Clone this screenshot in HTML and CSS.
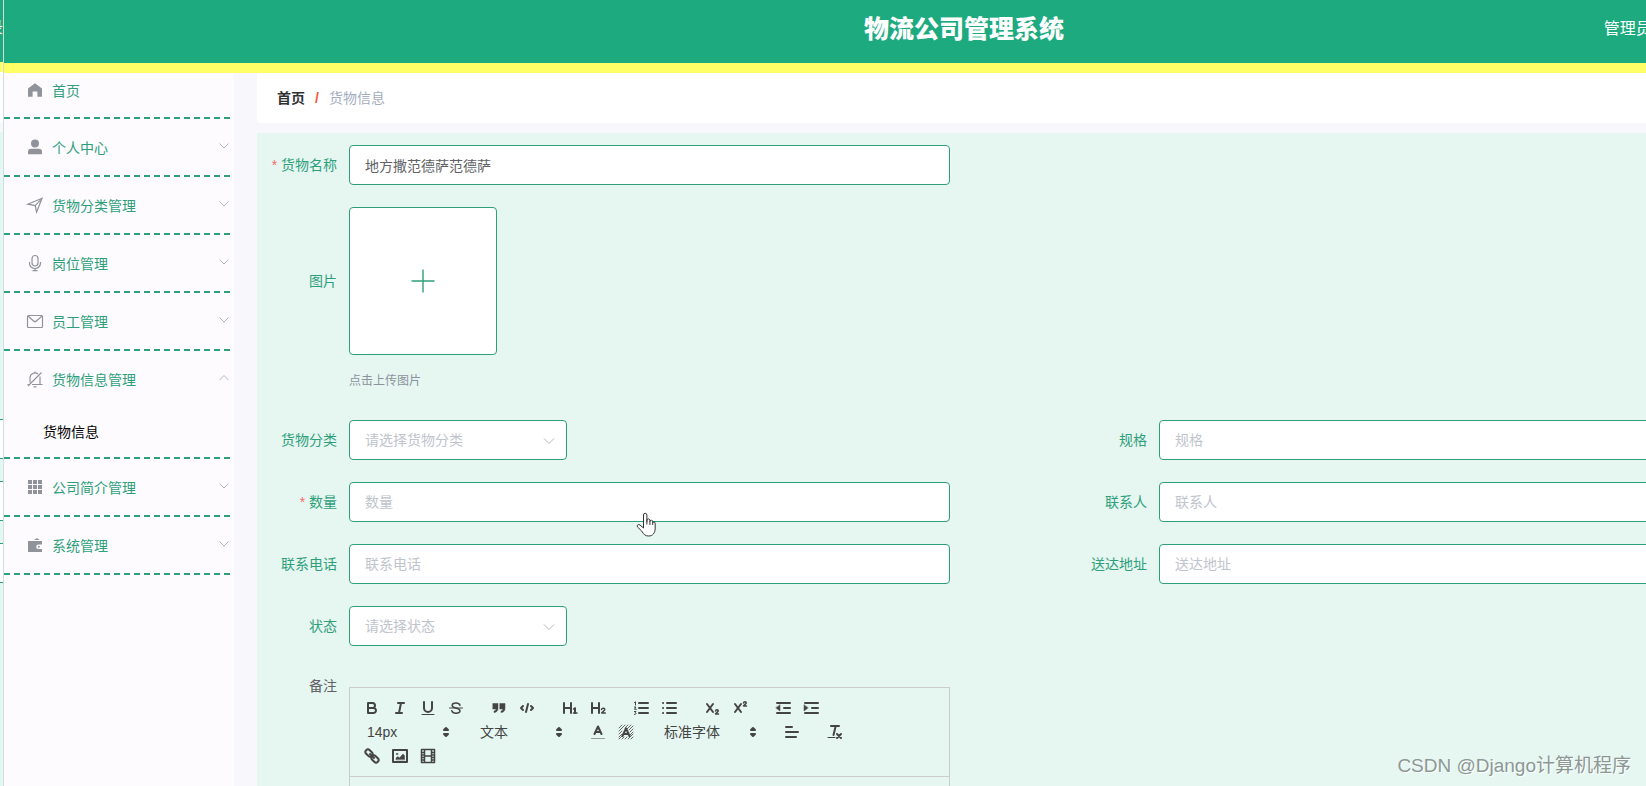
FILE: index.html
```
<!DOCTYPE html>
<html lang="zh-CN">
  <head>
    <meta charset="UTF-8" />
    <meta name="viewport" content="width=device-width, initial-scale=1.0" />
    <title>物流公司管理系统</title>
    <link rel="stylesheet" href="styles.css">
  </head>
  <body>
    <div class="page">
      <!-- sliver of the neighbouring screen -->
      <div class="edge">
        <div class="edge-head">录</div>
        <div class="edge-crumb"></div>
        <div class="edge-form">
          <div class="edge-field"></div>
          <div class="edge-field"></div>
          <div class="edge-field"></div>
        </div>
      </div>

      <div class="app">
        <header class="header">
          <h1>物流公司管理系统</h1>
          <div class="user">管理员 abo</div>
        </header>

        <div class="body">
          <nav class="sidebar">
            <ul class="menu">
              <li class="first">
                <a href="#">
                  <svg class="icon" viewBox="0 0 18 18"><path fill="currentColor" d="M9 2.200 2 7.600V15.800h4.600V10.600h4.800v5.200H16V7.600z"/></svg>
                  <span>首页</span>
                </a>
              </li>
              <li>
                <a href="#">
                  <svg class="icon" viewBox="0 0 18 18"><circle cx="9" cy="5.600" r="4" fill="currentColor"/><path fill="currentColor" d="M2 16.200v-2.400a3 3 0 0 1 3-3h8a3 3 0 0 1 3 3v2.400z"/></svg>
                  <span>个人中心</span>
                  <svg class="arrow" viewBox="0 0 12 12"><path d="M1.500 3.500 6 8l4.500-4.500"/></svg>
                </a>
              </li>
              <li>
                <a href="#">
                  <svg class="icon line" viewBox="0 0 18 18"><path d="M1.800 8.200 16 2.300 10.600 16.200 9.200 9.600z"/><path d="M9.200 9.600 16 2.300"/></svg>
                  <span>货物分类管理</span>
                  <svg class="arrow" viewBox="0 0 12 12"><path d="M1.500 3.500 6 8l4.500-4.500"/></svg>
                </a>
              </li>
              <li>
                <a href="#">
                  <svg class="icon line" viewBox="0 0 18 18"><rect x="6" y="1.500" width="6" height="10.500" rx="3"/><path d="M3.500 8v1.200a5.500 5.300 0 0 0 11 0V8M9 14.500v2M6.500 16.600h5"/></svg>
                  <span>岗位管理</span>
                  <svg class="arrow" viewBox="0 0 12 12"><path d="M1.500 3.500 6 8l4.500-4.500"/></svg>
                </a>
              </li>
              <li>
                <a href="#">
                  <svg class="icon line" viewBox="0 0 18 18"><rect x="1.500" y="3.500" width="15" height="12" rx="1"/><path d="m2 4 5.600 5a2 2 0 0 0 2.800 0L16 4"/></svg>
                  <span>员工管理</span>
                  <svg class="arrow" viewBox="0 0 12 12"><path d="M1.500 3.500 6 8l4.500-4.500"/></svg>
                </a>
              </li>
              <li>
                <a href="#">
                  <svg class="icon line" viewBox="0 0 18 18"><path d="M4 12.500V8a5 5 0 0 1 8-4M9 3V1.500M14 6.500v8M6 14.500h10.500M1.500 14.500h1M15.500 2.500 2 16M7.500 16.800h3"/></svg>
                  <span>货物信息管理</span>
                  <svg class="arrow" viewBox="0 0 12 12"><path d="M1.500 8 6 3.500 10.500 8"/></svg>
                </a>
                <ul class="submenu">
                  <li><a href="#">货物信息</a></li>
                </ul>
              </li>
              <li>
                <a href="#">
                  <svg class="icon" viewBox="0 0 18 18"><path fill="currentColor" d="M2 2h4v4H2zM7 2h4v4H7zM12 2h4v4h-4zM2 7h4v4H2zM7 7h4v4H7zM12 7h4v4h-4zM2 12h4v4H2zM7 12h4v4H7zM12 12h4v4h-4z"/></svg>
                  <span>公司简介管理</span>
                  <svg class="arrow" viewBox="0 0 12 12"><path d="M1.500 3.500 6 8l4.500-4.500"/></svg>
                </a>
              </li>
              <li>
                <a href="#">
                  <svg class="icon" viewBox="0 0 18 18"><path fill="currentColor" d="M2 5h14v3.500h-3.500a2.300 2.300 0 0 0 0 4.600H16V16H2zM8 4l3-2 2.500 2z"/><circle cx="12.800" cy="10.800" r="1" fill="currentColor"/></svg>
                  <span>系统管理</span>
                  <svg class="arrow" viewBox="0 0 12 12"><path d="M1.500 3.500 6 8l4.500-4.500"/></svg>
                </a>
              </li>
            </ul>
          </nav>

          <main class="main">
            <div class="breadcrumb">
              <a href="#">首页</a>
              <span class="slash">/</span>
              <span class="current">货物信息</span>
            </div>

            <form class="form">
              <div class="row">
                <div class="field">
                  <label for="name"><i>*</i> 货物名称</label>
                  <input type="text" id="name" value="地方撒范德萨范德萨" />
                </div>
              </div>
              <div class="row">
                <div class="field picture">
                  <label for="upload">图片</label>
                  <div class="upload-box">
                    <button type="button" id="upload" class="upload" aria-label="点击上传图片">
                      <svg width="24" height="24" viewBox="0 0 24 24"><path d="M12 .5v23M.5 12h23"/></svg>
                    </button>
                    <div class="tip">点击上传图片</div>
                  </div>
                </div>
              </div>
              <div class="row">
                <div class="field">
                  <label for="category">货物分类</label>
                  <div class="select">
                    <select id="category"><option>请选择货物分类</option></select>
                    <svg class="arrow" viewBox="0 0 12 12"><path d="M1 3.500 6 8.500l5-5"/></svg>
                  </div>
                </div>
                <div class="field">
                  <label for="spec">规格</label>
                  <input type="text" id="spec" placeholder="规格" />
                </div>
              </div>
              <div class="row">
                <div class="field">
                  <label for="amount"><i>*</i> 数量</label>
                  <input type="text" id="amount" placeholder="数量" />
                </div>
                <div class="field">
                  <label for="contact">联系人</label>
                  <input type="text" id="contact" placeholder="联系人" />
                </div>
              </div>
              <div class="row">
                <div class="field">
                  <label for="phone">联系电话</label>
                  <input type="text" id="phone" placeholder="联系电话" />
                </div>
                <div class="field">
                  <label for="address">送达地址</label>
                  <input type="text" id="address" placeholder="送达地址" />
                </div>
              </div>
              <div class="row">
                <div class="field">
                  <label for="status">状态</label>
                  <div class="select">
                    <select id="status"><option>请选择状态</option></select>
                    <svg class="arrow" viewBox="0 0 12 12"><path d="M1 3.500 6 8.500l5-5"/></svg>
                  </div>
                </div>
              </div>
              <div class="row">
                <div class="field remark">
                  <label for="remark">备注</label>
                  <div class="editor">
                    <div class="toolbar">
                      <span class="formats">
                        <button type="button" aria-label="加粗"><svg viewBox="0 0 18 18"><path d="M5 4h4.500A2.500 2.500 0 0 1 12 6.500 2.500 2.500 0 0 1 9.500 9H5zM5 9h5.500A2.500 2.500 0 0 1 13 11.500 2.500 2.500 0 0 1 10.500 14H5z"/></svg></button>
                        <button type="button" aria-label="斜体"><svg viewBox="0 0 18 18"><path d="M7 4h6M5 14h6M8 14l2-10"/></svg></button>
                        <button type="button" aria-label="下划线"><svg viewBox="0 0 18 18"><path d="M5 3v6a4 4 0 0 0 8 0V3"/><path class="thin" d="M3 15.500h12"/></svg></button>
                        <button type="button" aria-label="删除线"><svg viewBox="0 0 18 18"><path class="thin" d="M2.500 9h13"/><path class="mid" d="M13 6.200C12.500 4.600 11 3.900 9 3.900c-2.300 0-3.800 1-3.800 2.500C5.200 7.800 6.700 8.400 9 9s4 1.200 4 2.800c0 1.500-1.600 2.400-4 2.400-2.200 0-3.700-.8-4.200-2.400"/></svg></button>
                      </span>
                      <span class="formats">
                        <button type="button" aria-label="引用"><svg viewBox="0 0 18 18"><path class="fill" d="M3 4.500h5v5C8 12 6.500 13.300 4 13.500V12c1.300-.3 1.900-1 2-2H3zM10 4.500h5v5c0 2.500-1.500 3.800-4 4V12c1.300-.3 1.900-1 2-2h-3z"/></svg></button>
                        <button type="button" aria-label="代码"><svg viewBox="0 0 18 18"><path d="m5 7-2 2 2 2M13 7l2 2-2 2M10 5 8 13"/></svg></button>
                      </span>
                      <span class="formats">
                        <button type="button" aria-label="标题1"><svg viewBox="0 0 18 18"><path d="M3 4v10M10 4v10M3 9h7M14 9.500V14"/><path class="mid" d="m12.500 10 1.500-1M12.500 14H16"/></svg></button>
                        <button type="button" aria-label="标题2"><svg viewBox="0 0 18 18"><path d="M3 4v10M10 4v10M3 9h7"/><path class="mid" d="M12.500 10.500c.3-1.800 3.500-1.700 3.200.2-.2 1-2 1.800-3 3.300h3.600"/></svg></button>
                      </span>
                      <span class="formats">
                        <button type="button" aria-label="有序列表"><svg viewBox="0 0 18 18"><path d="M7 4h9M7 9h9M7 14h9"/><path class="thin" d="M2.500 3.500l1-.7V6M2.400 8h1.500L2.500 10.300h1.800M2.400 12.500h1.600l-.8 1.200c1.300 0 1.300 2-.8 1.700"/></svg></button>
                        <button type="button" aria-label="无序列表"><svg viewBox="0 0 18 18"><path d="M7 4h9M7 9h9M7 14h9M3 4h.1M3 9h.1M3 14h.1"/></svg></button>
                      </span>
                      <span class="formats">
                        <button type="button" aria-label="下标"><svg viewBox="0 0 18 18"><path d="m4 5 6 8M10 5 4 13"/><path class="mid" d="M12.500 12c.2-1.700 3-1.600 2.700 0-.2 1-1.700 1.500-2.700 3h3"/></svg></button>
                        <button type="button" aria-label="上标"><svg viewBox="0 0 18 18"><path d="m4 5 6 8M10 5 4 13"/><path class="mid" d="M12.500 4c.2-1.700 3-1.600 2.700 0-.2 1-1.700 1.500-2.700 3h3"/></svg></button>
                      </span>
                      <span class="formats">
                        <button type="button" aria-label="减少缩进"><svg viewBox="0 0 18 18"><path d="M3 4h13M10 9h6M3 14h13"/><path class="fill" d="M6 6v6L2 9z"/></svg></button>
                        <button type="button" aria-label="增加缩进"><svg viewBox="0 0 18 18"><path d="M3 4h13M10 9h6M3 14h13"/><path class="fill" d="M2 6v6l4-3z"/></svg></button>
                      </span>
                      <span class="formats picker">
                        <select aria-label="字号"><option>14px</option></select>
                        <svg viewBox="0 0 18 18"><path class="fill arrows" d="M7 7l2-2 2 2zM7 11l2 2 2-2z"/></svg>
                      </span>
                      <span class="formats picker">
                        <select aria-label="标题"><option>文本</option></select>
                        <svg viewBox="0 0 18 18"><path class="fill arrows" d="M7 7l2-2 2 2zM7 11l2 2 2-2z"/></svg>
                      </span>
                      <span class="formats">
                        <button type="button" aria-label="文字颜色"><svg viewBox="0 0 18 18"><path class="faint" d="M2.500 15.500h13"/><path d="M5.500 11 9 3.500l3.500 7.500M6.600 9h4.800"/></svg></button>
                        <button type="button" aria-label="背景颜色"><svg viewBox="0 0 18 18"><path class="hatch" d="M2 5l3-3M2 8l6-6M2 11l3-3M8 5l3-3M2 14l3-3M10 6l4-4M2 16l3-3M12 7l4-4M13 9l3-3M13 12l3-3M5 16l2-2M8 16l2-2M11 16l5-5M14 16l2-2"/><path d="M5.500 13 9 5.500l3.500 7.500M6.600 11h4.800"/></svg></button>
                      </span>
                      <span class="formats picker wide">
                        <select aria-label="字体"><option>标准字体</option></select>
                        <svg viewBox="0 0 18 18"><path class="fill arrows" d="M7 7l2-2 2 2zM7 11l2 2 2-2z"/></svg>
                      </span>
                      <span class="formats">
                        <button type="button" aria-label="对齐"><svg viewBox="0 0 18 18"><path d="M3 4h6M3 9h12M3 14h10"/></svg></button>
                      </span>
                      <span class="formats">
                        <button type="button" aria-label="清除格式"><svg viewBox="0 0 18 18"><path d="M5 3h8M7.500 12 9.700 3M11 11l4 4M15 11l-4 4"/><path class="thin" d="M2 14.500h7"/></svg></button>
                      </span>
                      <span class="formats">
                        <button type="button" aria-label="链接"><svg viewBox="0 0 18 18"><rect x="-4" y="-2.500" width="8" height="5" rx="2.500" transform="translate(6 6) rotate(45)"/><rect x="-4" y="-2.500" width="8" height="5" rx="2.500" transform="translate(12 12) rotate(45)"/><path d="m7 7 4 4"/></svg></button>
                        <button type="button" aria-label="图片"><svg viewBox="0 0 18 18"><rect x="2" y="3" width="14" height="12"/><path class="fill" d="M5 12.500v-1.500l2-1.500L8.500 11 12 7l1.500 1.500v4z"/><circle class="fill" cx="6" cy="7" r=".8"/></svg></button>
                        <button type="button" aria-label="视频"><svg viewBox="0 0 18 18"><path class="mid" d="M2.500 2.500h13v13h-13zM5.500 2.500v13M12.500 2.500v13M5.500 9h7M3 5.500h2M3 8h2M3 10.500h2M3 13h2M13 5.500h2M13 8h2M13 10.500h2M13 13h2"/></svg></button>
                      </span>
                    </div>
                    <textarea id="remark"></textarea>
                  </div>
                </div>
              </div>
            </form>
          </main>
        </div>
      </div>
    </div>

    <svg class="pointer" viewBox="0 0 20 26"><path d="M7.500 16V3a1.700 1.700 0 0 1 3.400 0v6.500-1.200a1.500 1.500 0 0 1 3 .2v1a1.400 1.400 0 0 1 2.800.3v1a1.300 1.300 0 0 1 2.500.4V16c0 5-2.500 8-6.500 8-3.500 0-5-1.500-7-5L1.500 15c-1-2 1-3.200 2.500-2l3.500 3M10.900 9v3.500M13.900 9v4M16.700 10.500V13"/></svg>
    <div class="watermark">CSDN @Django计算机程序</div>
  </body>
</html>
```
FILE: styles.css
```
* {
  box-sizing: border-box;
}
body {
  margin: 0;
  height: 100vh;
  overflow: hidden;
  position: relative;
  background-color: #f8f7fc;
  font-family: "Liberation Sans", "Noto Sans CJK SC", sans-serif;
  font-size: 14px;
  color: #606266;
}
input,
select,
button,
textarea {
  font-family: inherit;
  font-size: 14px;
}
a {
  text-decoration: none;
}
ul {
  margin: 0;
  padding: 0;
  list-style-type: none;
}
svg {
  fill: none;
  stroke: currentColor;
}
.page {
  display: flex;
  min-height: 100vh;
}

/* neighbouring screen */
.edge {
  flex: none;
  width: 4px;
  border-right: 1px solid #cfdfdb;
  background-color: #1eaa7f;
  display: flex;
  flex-direction: column;
  overflow: hidden;
}
.edge-head {
  height: 72px;
  display: flex;
  justify-content: flex-end;
  border-bottom: 10px solid #ffff66;
  color: #fff;
  font-size: 16px;
  line-height: 56px;
}
.edge-crumb {
  height: 60px;
  background-color: #fff;
  border-bottom: 10px solid #f8f7fc;
}
.edge-form {
  flex: 1;
  display: flex;
  flex-direction: column;
  gap: 22px;
  padding-top: 287px;
  background-color: #e6f6f1;
}
.edge-field {
  height: 40px;
  background-color: #fff;
  border: solid #2f9f7b;
  border-width: 1px 0;
}

.app {
  flex: 1 0 auto;
  min-width: 1920px;
  display: flex;
  flex-direction: column;
}
.header {
  position: relative;
  height: 73px;
  background-color: #1eaa7f;
  border-bottom: 10px solid #ffff66;
  color: #fff;
}
.header h1 {
  margin: 0;
  text-align: center;
  font-size: 25px;
  font-weight: 900;
  line-height: 58px;
}
.user {
  position: absolute;
  top: 0;
  right: 241px;
  font-size: 16px;
  line-height: 58px;
}
.body {
  flex: 1;
  display: flex;
}

/* menu */
.sidebar {
  flex: none;
  width: 230px;
  padding-right: 4px;
  background-color: #fdfbfe;
}
.menu > li {
  border-bottom: 2px dashed #2f9f7b;
}
.menu > li > a {
  display: flex;
  align-items: center;
  height: 56px;
  padding-left: 22px;
  color: #2f9f7b;
}
.menu > .first > a {
  height: 44px;
  padding-bottom: 10px;
}
.icon {
  width: 18px;
  height: 18px;
  margin-right: 8px;
  color: #909399;
  stroke-width: 1.2;
}
.icon:not(.line) {
  stroke: none;
}
.arrow {
  width: 12px;
  height: 12px;
  color: #b4b7be;
}
.menu .arrow {
  margin: 0 0 2px auto;
}
.submenu a {
  display: block;
  padding-left: 39px;
  line-height: 50px;
  color: #000;
}

/* content */
.main {
  flex: 1;
  display: flex;
  flex-direction: column;
  gap: 10px;
  padding: 0 23px;
}
.breadcrumb {
  display: flex;
  gap: 10px;
  padding: 0 20px;
  background-color: #fff;
  border-radius: 4px;
  line-height: 50px;
}
.breadcrumb a {
  font-weight: bold;
  color: #303133;
}
.slash {
  font-weight: bold;
  color: #ee5a3a;
}
.current {
  color: #a3adc0;
}
.form {
  flex: 1;
  display: flex;
  flex-direction: column;
  gap: 22px;
  padding: 12px;
  background-color: #e6f6f1;
}
.row {
  display: flex;
}
.field {
  width: 50%;
  display: flex;
  padding-right: 129px;
}
.field label {
  flex: none;
  width: 80px;
  padding-right: 12px;
  text-align: right;
  line-height: 40px;
  white-space: nowrap;
  color: #2f9f7b;
}
.field label i {
  color: #f56c6c;
  font-style: normal;
}
.field input {
  flex: 1;
  min-width: 0;
}
.field input,
.select select {
  height: 40px;
  padding: 0 15px;
  border: 1px solid #2f9f7b;
  border-radius: 4px;
  background-color: #fff;
  color: #606266;
}
.field input::placeholder {
  color: #c0c4cc;
}
.select {
  position: relative;
}
.select select {
  width: 218px;
  appearance: none;
  color: #c0c4cc;
}
.select .arrow {
  position: absolute;
  top: 15px;
  right: 12px;
  pointer-events: none;
}
.field.picture label {
  line-height: 148px;
}
.upload-box {
  padding-bottom: 7px;
}
.upload {
  display: flex;
  align-items: center;
  justify-content: center;
  width: 148px;
  height: 148px;
  border: 1px solid #2f9f7b;
  border-radius: 4px;
  background-color: #fff;
  color: #2f9f7b;
}
.upload svg {
  stroke-width: 1.4;
}
.tip {
  margin-top: 16px;
  font-size: 12px;
  line-height: 20px;
  color: #8a939c;
}

/* rich text editor */
.field.remark label {
  line-height: 36px;
  color: #606266;
}
.editor {
  flex: 1;
  margin-top: 19px;
  border: 1px solid #ccc;
}
.toolbar {
  display: flex;
  flex-wrap: wrap;
  padding: 8px;
  border-bottom: 1px solid #ccc;
}
.formats {
  display: flex;
  margin-right: 15px;
  color: #444;
}
.toolbar button {
  width: 28px;
  height: 24px;
  padding: 3px 5px;
  border: none;
  background: none;
  color: #444;
}
.toolbar svg {
  display: block;
  width: 18px;
  height: 18px;
  stroke-width: 2;
  stroke-linecap: round;
  stroke-linejoin: round;
}
.toolbar .thin {
  stroke-width: 1;
}
.toolbar .mid {
  stroke-width: 1.5;
}
.toolbar .faint {
  stroke-width: 1;
  opacity: 0.5;
}
.toolbar .hatch {
  stroke-width: 0.8;
}
.toolbar .fill {
  fill: currentColor;
  stroke-width: 0.5;
}
.toolbar .arrows {
  stroke-width: 2;
}
.picker {
  position: relative;
  width: 98px;
}
.picker.wide {
  width: 108px;
}
.picker select {
  width: 100%;
  height: 24px;
  padding: 0 9px;
  border: none;
  background: none;
  appearance: none;
  color: #444;
}
.picker svg {
  position: absolute;
  top: 3px;
  right: 1px;
  pointer-events: none;
}
.editor textarea {
  display: block;
  width: 100%;
  height: 200px;
  border: none;
  background: none;
  resize: none;
}

.pointer {
  position: absolute;
  left: 636px;
  top: 512px;
  width: 20px;
  height: 26px;
  fill: #fff;
  color: #333;
}
.watermark {
  position: absolute;
  right: 15px;
  bottom: 5px;
  font-size: 19px;
  line-height: 30px;
  color: #8b9894;
  text-shadow: 1px 1px #fff;
}
```
